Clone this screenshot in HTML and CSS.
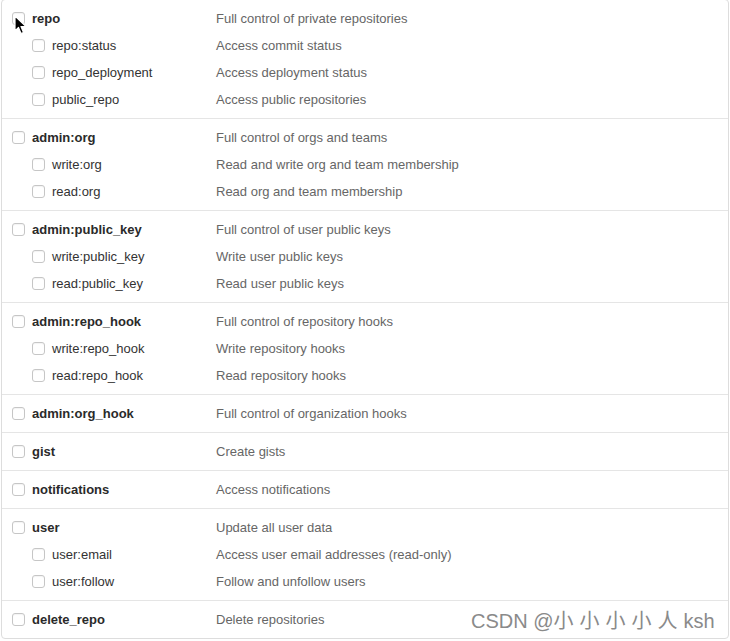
FILE: index.html
```html
<!DOCTYPE html>
<html>
<head>
<meta charset="utf-8">
<link rel="stylesheet" href="styles.css">
</head>
<body>
<div class="scopes">
  <div class="group">
    <div class="row top"><span class="cb"></span><span class="name">repo</span><span class="desc">Full control of private repositories</span></div>
    <div class="row sub"><span class="cb"></span><span class="name">repo:status</span><span class="desc">Access commit status</span></div>
    <div class="row sub"><span class="cb"></span><span class="name">repo_deployment</span><span class="desc">Access deployment status</span></div>
    <div class="row sub"><span class="cb"></span><span class="name">public_repo</span><span class="desc">Access public repositories</span></div>
  </div>
  <div class="group">
    <div class="row top"><span class="cb"></span><span class="name">admin:org</span><span class="desc">Full control of orgs and teams</span></div>
    <div class="row sub"><span class="cb"></span><span class="name">write:org</span><span class="desc">Read and write org and team membership</span></div>
    <div class="row sub"><span class="cb"></span><span class="name">read:org</span><span class="desc">Read org and team membership</span></div>
  </div>
  <div class="group">
    <div class="row top"><span class="cb"></span><span class="name">admin:public_key</span><span class="desc">Full control of user public keys</span></div>
    <div class="row sub"><span class="cb"></span><span class="name">write:public_key</span><span class="desc">Write user public keys</span></div>
    <div class="row sub"><span class="cb"></span><span class="name">read:public_key</span><span class="desc">Read user public keys</span></div>
  </div>
  <div class="group">
    <div class="row top"><span class="cb"></span><span class="name">admin:repo_hook</span><span class="desc">Full control of repository hooks</span></div>
    <div class="row sub"><span class="cb"></span><span class="name">write:repo_hook</span><span class="desc">Write repository hooks</span></div>
    <div class="row sub"><span class="cb"></span><span class="name">read:repo_hook</span><span class="desc">Read repository hooks</span></div>
  </div>
  <div class="group">
    <div class="row top"><span class="cb"></span><span class="name">admin:org_hook</span><span class="desc">Full control of organization hooks</span></div>
  </div>
  <div class="group">
    <div class="row top"><span class="cb"></span><span class="name">gist</span><span class="desc">Create gists</span></div>
  </div>
  <div class="group">
    <div class="row top"><span class="cb"></span><span class="name">notifications</span><span class="desc">Access notifications</span></div>
  </div>
  <div class="group">
    <div class="row top"><span class="cb"></span><span class="name">user</span><span class="desc">Update all user data</span></div>
    <div class="row sub"><span class="cb"></span><span class="name">user:email</span><span class="desc">Access user email addresses (read-only)</span></div>
    <div class="row sub"><span class="cb"></span><span class="name">user:follow</span><span class="desc">Follow and unfollow users</span></div>
  </div>
  <div class="group">
    <div class="row top"><span class="cb"></span><span class="name">delete_repo</span><span class="desc">Delete repositories</span></div>
  </div>
</div>
<svg class="cursor" width="14" height="20" viewBox="0 0 14 20"><path d="M1 1 L1 16 L4.5 12.5 L7 18.5 L9.5 17.5 L7 11.5 L12 11.5 Z" fill="#000" stroke="#fff" stroke-width="1.2" stroke-linejoin="round"/></svg>
<div class="watermark">CSDN @<span class="cjk">小小小小人</span>ksh</div>
</body>
</html>
```
FILE: styles.css
```css
html, body {
  margin: 0;
  padding: 0;
  background: #fff;
}
body {
  position: relative;
  width: 730px;
  height: 641px;
  overflow: hidden;
  font-family: "Liberation Sans", Arial, sans-serif;
  font-size: 13px;
}
.scopes {
  margin: -1px 1px 0 1px;
  border: 1px solid #ddd;
  border-radius: 4px;
}
.group {
  padding: 5px 0;
  border-top: 1px solid #e5e5e5;
}
.group:first-child {
  border-top: none;
}
.row {
  display: grid;
  grid-template-columns: 13px 1fr;
  height: 27px;
  align-items: center;
  padding-left: 10px;
}
.row.top {
  grid-template-columns: 13px 177px 1fr;
  column-gap: 7px;
}
.row.sub {
  grid-template-columns: 13px 157px 1fr;
  column-gap: 7px;
  padding-left: 30px;
}
.cb {
  width: 11px;
  height: 11px;
  border: 1px solid #c6c6c6;
  border-radius: 3px;
  background: #fff;
  box-shadow: inset 0 1px 1px rgba(0,0,0,0.05);
}
.name {
  color: #333;
  white-space: nowrap;
}
.top .name {
  font-weight: bold;
  color: #2a2a2a;
}
.desc {
  color: #666;
  white-space: nowrap;
}
.cursor {
  position: absolute;
  left: 14px;
  top: 15px;
}
.watermark {
  position: absolute;
  left: 471px;
  top: 605px;
  font-family: "Liberation Sans", "Noto Sans CJK SC", sans-serif;
  font-size: 20px;
  color: #8a8a8a;
  text-shadow: 1px 1px 0 #fff, -1px 0 0 rgba(255,255,255,0.8);
  white-space: nowrap;
}
.cjk {
  letter-spacing: 6px;
}
```
